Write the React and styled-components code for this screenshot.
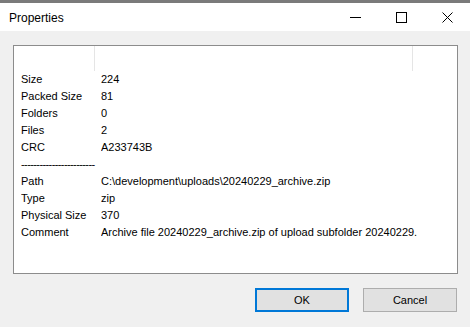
import React from 'react';
import styled, { createGlobalStyle } from 'styled-components';

const GlobalStyle = createGlobalStyle`
  html, body {
    margin: 0;
    padding: 0;
    background: #f0f0f0;
  }
  body {
    font-family: "Liberation Sans", Arial, sans-serif;
    color: #000;
  }
`;

const Window = styled.div`
  width: 470px;
  height: 327px;
  display: flex;
  flex-direction: column;
  background: #f0f0f0;
  overflow: hidden;
`;

const TopStrip = styled.div`
  height: 3px;
  flex: 0 0 3px;
  background: #7a7a7a;
`;

const TitleBar = styled.div`
  height: 28px;
  flex: 0 0 28px;
  background: #fff;
  display: flex;
  align-items: center;
  padding-left: 9px;
`;

const Title = styled.span`
  flex: 1;
  font-size: 12px;
  padding-top: 1px;
`;

const CaptionButton = styled.div`
  width: 46px;
  height: 28px;
  display: flex;
  align-items: center;
  justify-content: center;
`;

const Body = styled.div`
  flex: 1;
  display: flex;
  flex-direction: column;
  padding: 14px 12px 0 13px;
`;

const ListBox = styled.div`
  height: 229px;
  box-sizing: border-box;
  border: 1px solid #8c8c8c;
  background: #fff;
  display: flex;
  flex-direction: column;
`;

const Header = styled.div`
  height: 25px;
  flex: 0 0 25px;
  display: grid;
  grid-template-columns: 81px 318px 1fr;
`;

const HeaderCell = styled.div`
  border-right: ${p => (p.$last ? 'none' : '1px solid #e5e5e5')};
`;

const Row = styled.div`
  height: 17px;
  display: grid;
  grid-template-columns: 80px 1fr;
  padding-left: 7px;
  font-size: 11px;
  line-height: 17px;
  white-space: nowrap;
  letter-spacing: ${p => (p.$rule ? '-0.6px' : 'normal')};
`;

const Cell = styled.span`
  overflow: hidden;
`;

const Footer = styled.div`
  display: flex;
  justify-content: flex-end;
  gap: 14px;
  padding: 14px 1px 0 0;
`;

const Button = styled.button`
  width: 94px;
  height: 24px;
  box-sizing: border-box;
  background: #e1e1e1;
  border: ${p => (p.$default ? '2px solid #0078d7' : '1px solid #adadad')};
  font-family: "Liberation Sans", Arial, sans-serif;
  font-size: 11px;
  color: #000;
  padding: 0;
`;

const rows = [
  ['Size', '224'],
  ['Packed Size', '81'],
  ['Folders', '0'],
  ['Files', '2'],
  ['CRC', 'A233743B'],
  ['------------------------', ''],
  ['Path', 'C:\\development\\uploads\\20240229_archive.zip'],
  ['Type', 'zip'],
  ['Physical Size', '370'],
  ['Comment', 'Archive file 20240229_archive.zip of upload subfolder 20240229.'],
];

export default function App() {
  return (
    <Window>
      <GlobalStyle />
      <TopStrip />
      <TitleBar>
        <Title>Properties</Title>
        <CaptionButton>
          <svg width="11" height="11" viewBox="0 0 11 11">
            <line x1="0" y1="5.5" x2="11" y2="5.5" stroke="#000" strokeWidth="1" />
          </svg>
        </CaptionButton>
        <CaptionButton>
          <svg width="11" height="11" viewBox="0 0 11 11">
            <rect x="0.5" y="0.5" width="10" height="10" fill="none" stroke="#000" strokeWidth="1" />
          </svg>
        </CaptionButton>
        <CaptionButton>
          <svg width="11" height="11" viewBox="0 0 11 11">
            <path d="M0.5 0.5 L10.5 10.5 M10.5 0.5 L0.5 10.5" stroke="#000" strokeWidth="1" />
          </svg>
        </CaptionButton>
      </TitleBar>
      <Body>
        <ListBox>
          <Header>
            <HeaderCell />
            <HeaderCell />
            <HeaderCell $last />
          </Header>
          {rows.map(([k, v], i) => (
            <Row key={i} $rule={k.startsWith('---')}>
              <Cell>{k}</Cell>
              <Cell>{v}</Cell>
            </Row>
          ))}
        </ListBox>
        <Footer>
          <Button $default>OK</Button>
          <Button>Cancel</Button>
        </Footer>
      </Body>
    </Window>
  );
}
